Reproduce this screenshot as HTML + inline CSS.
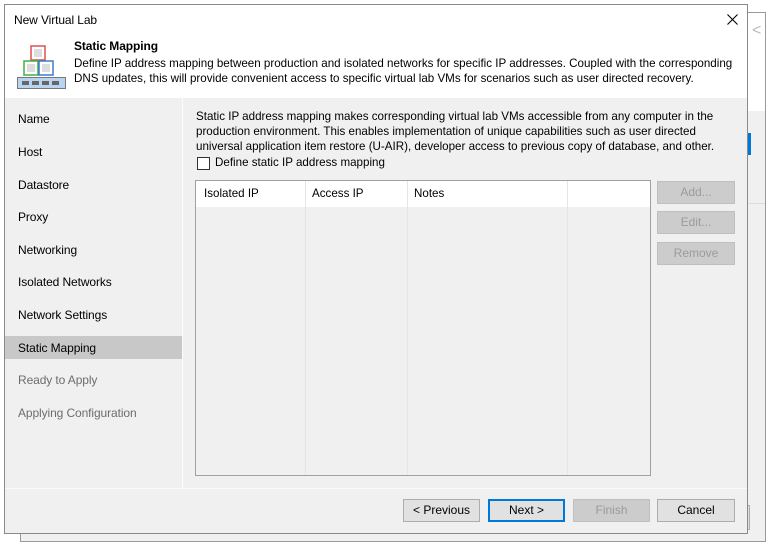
<!DOCTYPE html>
<html><head><meta charset="utf-8"><style>
*{margin:0;padding:0;box-sizing:border-box}
body{width:768px;height:544px;background:#fff;position:relative;overflow:hidden;font-family:"Liberation Sans","DejaVu Sans",sans-serif;font-size:12px;color:#000}
.abs{position:absolute}
.p{font-size:11.6px;letter-spacing:0;white-space:nowrap}
.btn{position:absolute;height:23px;background:#e1e1e1;border:1px solid #adadad;text-align:center;line-height:21px;font-size:12px}
.dis{background:#cccccc;border-color:#bfbfbf;color:#9b9b9b}
.nav{position:absolute;left:18px;font-size:12px;letter-spacing:-0.1px}
</style></head><body>
<div class="abs" style="left:20px;top:12px;width:746px;height:530px;border:1px solid #9a9a9a;background:#f0f0f0"></div>
<div class="abs" style="left:748px;top:13px;width:17px;height:98px;background:#fff"></div>
<div class="abs" style="left:748px;top:133px;width:3px;height:22px;background:#0078d7"></div>
<div class="abs" style="left:748px;top:203px;width:17px;height:1px;background:#dcdcdc"></div>
<div class="abs" style="left:740px;top:505px;width:10px;height:25px;border:1px solid #adadad;background:#e1e1e1"></div>
<div class="abs" style="left:752px;top:22px;color:#bbb;font-size:16px">&lt;</div>
<div class="abs" style="left:4px;top:4px;width:744px;height:530px;border:1px solid #8a8a8a;background:#f0f0f0;overflow:hidden">
 <div class="abs" style="left:0;top:0;width:742px;height:93px;background:#fff"></div>
 <div class="abs" style="left:9px;top:8px;font-size:12px;letter-spacing:-0.1px">New Virtual Lab</div>
 <svg class="abs" style="left:722px;top:9px" width="11" height="11" viewBox="0 0 11 11"><path d="M0.5 0.5L10.5 10.5M10.5 0.5L0.5 10.5" stroke="#000" stroke-width="1.1"/></svg>
 <svg class="abs" style="left:10px;top:36px" width="52" height="52" viewBox="0 0 52 52">
  <rect x="16" y="5" width="14" height="14" fill="#fff" stroke="#e05050" stroke-width="1.5"/><rect x="19" y="8" width="8" height="8" fill="#ddd"/>
  <rect x="9" y="20" width="14" height="14" fill="#fff" stroke="#40b040" stroke-width="1.5"/><rect x="12" y="23" width="8" height="8" fill="#ddd"/>
  <rect x="24" y="20" width="14" height="14" fill="#fff" stroke="#3a7ad0" stroke-width="1.5"/><rect x="27" y="23" width="8" height="8" fill="#ddd"/>
  <rect x="2.5" y="36.5" width="48" height="11" fill="#b8d4f0" stroke="#777"/>
  <g fill="#666"><rect x="7" y="40" width="7" height="4"/><rect x="17" y="40" width="7" height="4"/><rect x="27" y="40" width="7" height="4"/><rect x="37" y="40" width="7" height="4"/></g>
 </svg>
 <div class="abs" style="left:69px;top:34px;font-weight:bold;letter-spacing:-0.1px">Static Mapping</div>
 <div class="abs p" style="left:69px;top:51px;line-height:15px">Define IP address mapping between production and isolated networks for specific IP addresses. Coupled with the corresponding<br>DNS updates, this will provide convenient access to specific virtual lab VMs for scenarios such as user directed recovery.</div>
 <div class="abs" style="left:177px;top:93px;width:1px;height:390px;background:#fbfbfb"></div>
 <div class="abs" style="left:0;top:483px;width:742px;height:1px;background:#fbfbfb"></div>
 <div class="abs" style="left:0;top:331px;width:177px;height:23px;background:#c8c8c8"></div>
</div>
<div class="nav" style="top:112px">Name</div>
<div class="nav" style="top:145px">Host</div>
<div class="nav" style="top:178px">Datastore</div>
<div class="nav" style="top:210px">Proxy</div>
<div class="nav" style="top:243px">Networking</div>
<div class="nav" style="top:275px">Isolated Networks</div>
<div class="nav" style="top:308px">Network Settings</div>
<div class="nav" style="top:341px">Static Mapping</div>
<div class="nav" style="top:373px;color:#6d6d6d">Ready to Apply</div>
<div class="nav" style="top:406px;color:#6d6d6d">Applying Configuration</div>

<div class="abs p" style="left:196px;top:109px;line-height:15px">Static IP address mapping makes corresponding virtual lab VMs accessible from any computer in the<br>production environment. This enables implementation of unique capabilities such as user directed<br>universal application item restore (U-AIR), developer access to previous copy of database, and other.</div>
<div class="abs" style="left:197px;top:157px;width:13px;height:13px;border:1px solid #333;background:#fff"></div>
<div class="abs p" style="left:215px;top:156px">Define static IP address mapping</div>

<div class="abs" style="left:195px;top:180px;width:456px;height:296px;border:1px solid #a0a0a0;background:#f0f0f0">
 <div class="abs" style="left:0;top:0;width:454px;height:26px;background:#fff"></div>
 <div class="abs" style="left:109px;top:0;width:1px;height:294px;background:#e5e5e5"></div>
 <div class="abs" style="left:211px;top:0;width:1px;height:294px;background:#e5e5e5"></div>
 <div class="abs" style="left:371px;top:0;width:1px;height:294px;background:#e5e5e5"></div>
 <div class="abs p" style="left:8px;top:6px">Isolated IP</div>
 <div class="abs p" style="left:116px;top:6px">Access IP</div>
 <div class="abs p" style="left:218px;top:6px">Notes</div>
</div>
<div class="btn dis" style="left:657px;top:181px;width:78px">Add...</div>
<div class="btn dis" style="left:657px;top:211px;width:78px">Edit...</div>
<div class="btn dis" style="left:657px;top:242px;width:78px">Remove</div>

<div class="btn" style="left:403px;top:499px;width:77px">&lt; Previous</div>
<div class="btn" style="left:488px;top:499px;width:77px;border:1px solid #0078d7;box-shadow:inset 0 0 0 1px #0078d7">Next &gt;</div>
<div class="btn dis" style="left:573px;top:499px;width:77px">Finish</div>
<div class="btn" style="left:657px;top:499px;width:78px">Cancel</div>
</body></html>
